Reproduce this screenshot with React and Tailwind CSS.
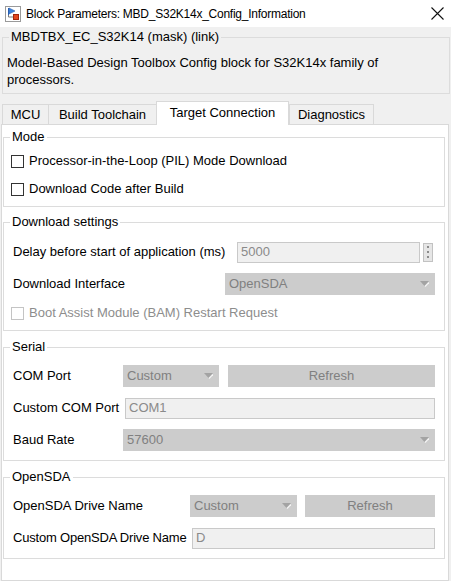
import React from 'react'

/* Simulink-style "Block Parameters" mask dialog, Target Connection tab */

const FONT = { fontFamily: '"Liberation Sans", Arial, sans-serif' }

function BlockIcon() {
  return (
    <svg width="16" height="16" viewBox="0 0 16 16" className="shrink-0">
      <rect x="0.5" y="0.5" width="15" height="15" fill="#fff" stroke="#9a9a9a" />
      <line x1="3.5" y1="2" x2="3.5" y2="9" stroke="#2b5fb0" />
      <polygon points="4,2 10,5 4,8" fill="#3d86e0" stroke="#2b5fb0" strokeWidth="0.6" />
      <polyline points="3.5,9 3.5,11 8,11" fill="none" stroke="#7a7a7a" />
      <rect x="8.5" y="8.5" width="5" height="5" fill="#e2461d" stroke="#a2260a" />
    </svg>
  )
}

function CloseIcon() {
  return (
    <svg width="13" height="13" viewBox="0 0 13 13">
      <path d="M0.5 0.5 L12.5 12.5 M12.5 0.5 L0.5 12.5" stroke="#111" strokeWidth="1.1" />
    </svg>
  )
}

function Arrow() {
  return (
    <svg width="9" height="6" viewBox="0 0 9 6" className="shrink-0">
      <polygon points="0,0 9,0 4.5,5" fill="#a3a3a3" />
      <line x1="5" y1="5.5" x2="9" y2="1.5" stroke="#f4f4f4" strokeWidth="1.2" />
    </svg>
  )
}

function Group({ title, className = '', children }) {
  return (
    <fieldset className={`border border-[#dcdcdc] ${className}`}>
      <legend className="ml-[6px] px-[2px] text-[13px] leading-[16px] text-black">{title}</legend>
      {children}
    </fieldset>
  )
}

function Check({ label, disabled, className = 'pl-[7px]' }) {
  return (
    <div className={`flex h-[28px] items-center ${className}`}>
      <span
        className={`h-[13px] w-[13px] shrink-0 border bg-white ${
          disabled ? 'border-[#c4c4c4]' : 'border-[#333333]'
        }`}
      />
      <span className={`ml-[5px] ${disabled ? 'text-[#8d8d8d]' : 'text-black'}`}>{label}</span>
    </div>
  )
}

function Combo({ value, className = '' }) {
  return (
    <div
      className={`flex h-[22px] items-center justify-between border border-[#cccccc] bg-[#cccccc] pl-[3px] pr-[5px] text-[#808080] ${className}`}
    >
      <span>{value}</span>
      <Arrow />
    </div>
  )
}

function Field({ value, className = '' }) {
  return (
    <div
      className={`flex h-[21px] items-center border border-[#c9c9c9] bg-[#f0f0f0] px-[3px] text-[#8a8a8a] ${className}`}
    >
      {value}
    </div>
  )
}

function Button({ label, className = '' }) {
  return (
    <div
      className={`flex h-[22px] items-center justify-center border border-[#cccccc] bg-[#cccccc] text-[#808080] ${className}`}
    >
      {label}
    </div>
  )
}

const TABS = [
  { name: 'MCU', w: 'w-[47px]' },
  { name: 'Build Toolchain', w: 'w-[109px]' },
  { name: 'Target Connection', w: 'w-[133px]', active: true },
  { name: 'Diagnostics', w: 'w-[85px]' },
]

export default function App() {
  return (
    <div
      style={FONT}
      className="flex h-[581px] w-[451px] flex-col overflow-hidden bg-[#f0f0f0] text-[13px] text-black"
    >
      {/* Title bar */}
      <div className="flex h-[27px] shrink-0 items-center bg-white pl-[5px] pr-[7px]">
        <BlockIcon />
        <span className="ml-[5px] flex-1 text-[12px] tracking-[-0.25px]">
          Block Parameters: MBD_S32K14x_Config_Information
        </span>
        <CloseIcon />
      </div>

      {/* Mask description */}
      <Group title="MBDTBX_EC_S32K14 (mask) (link)" className="ml-[2px] mr-[1px] mt-[2px]">
        <div className="pb-[5px] pl-[4px] pt-[9px] leading-[17px]">
          Model-Based Design Toolbox Config block for S32K14x family of
          <br />
          processors.
        </div>
      </Group>

      {/* Tabs */}
      <div className="ml-[2px] mt-[7px] flex h-[23px] items-end">
        {TABS.map((t) =>
          t.active ? (
            <div
              key={t.name}
              className={`${t.w} relative z-10 -mb-[1px] flex h-[24px] items-center justify-center border border-b-0 border-[#d9d9d9] bg-white pb-[2px]`}
            >
              {t.name}
            </div>
          ) : (
            <div
              key={t.name}
              className={`${t.w} -mr-[1px] flex h-[20px] items-center justify-center border border-b-0 border-[#d9d9d9] bg-[#f0f0f0]`}
            >
              {t.name}
            </div>
          )
        )}
      </div>

      {/* Tab panel */}
      <div className="ml-[1px] w-[448px] flex-1 border border-[#d9d9d9] bg-white pl-[1px] pr-[3px]">
        <Group title="Mode" className="mt-[4px]">
          <div className="pb-[3px] pt-[2px]">
            <Check label="Processor-in-the-Loop (PIL) Mode Download" />
            <Check label="Download Code after Build" />
          </div>
        </Group>

        <Group title="Download settings" className="mt-[7px]">
          <div className="pb-[4px] pt-[6px]">
            <div className="flex h-[32px] items-center px-[9px]">
              <span className="flex-1">Delay before start of application (ms)</span>
              <Field value="5000" className="w-[183px]" />
              <div className="ml-[3px] mr-[2px] flex h-[19px] w-[10px] flex-col items-center justify-center gap-[3px] border border-[#c2c2c2] bg-[#e6e6e6]">
                <span className="h-[2px] w-[2px] bg-[#8c8c8c]" />
                <span className="h-[2px] w-[2px] bg-[#8c8c8c]" />
                <span className="h-[2px] w-[2px] bg-[#8c8c8c]" />
              </div>
            </div>
            <div className="flex h-[32px] items-center px-[9px]">
              <span className="flex-1">Download Interface</span>
              <Combo value="OpenSDA" className="w-[210px]" />
            </div>
            <div className="flex h-[26px] items-center">
              <Check label="Boot Assist Module (BAM) Restart Request" disabled />
            </div>
          </div>
        </Group>

        <Group title="Serial" className="mt-[8px]">
          <div className="pb-[4px] pl-[9px] pr-[9px] pt-[5px]">
            <div className="flex h-[32px] items-center">
              <span className="w-[110px] shrink-0">COM Port</span>
              <Combo value="Custom" className="w-[96px]" />
              <Button label="Refresh" className="ml-[9px] flex-1" />
            </div>
            <div className="flex h-[32px] items-center">
              <span className="w-[112px] shrink-0">Custom COM Port</span>
              <Field value="COM1" className="flex-1" />
            </div>
            <div className="flex h-[32px] items-center">
              <span className="w-[110px] shrink-0">Baud Rate</span>
              <Combo value="57600" className="flex-1" />
            </div>
          </div>
        </Group>

        <Group title="OpenSDA" className="mt-[8px]">
          <div className="pb-[4px] pl-[9px] pr-[9px] pt-[5px]">
            <div className="flex h-[32px] items-center">
              <span className="w-[177px] shrink-0">OpenSDA Drive Name</span>
              <Combo value="Custom" className="w-[107px]" />
              <Button label="Refresh" className="ml-[8px] flex-1" />
            </div>
            <div className="flex h-[32px] items-center">
              <span className="w-[179px] shrink-0 tracking-[-0.2px]">Custom OpenSDA Drive Name</span>
              <Field value="D" className="flex-1" />
            </div>
          </div>
        </Group>
      </div>
    </div>
  )
}
